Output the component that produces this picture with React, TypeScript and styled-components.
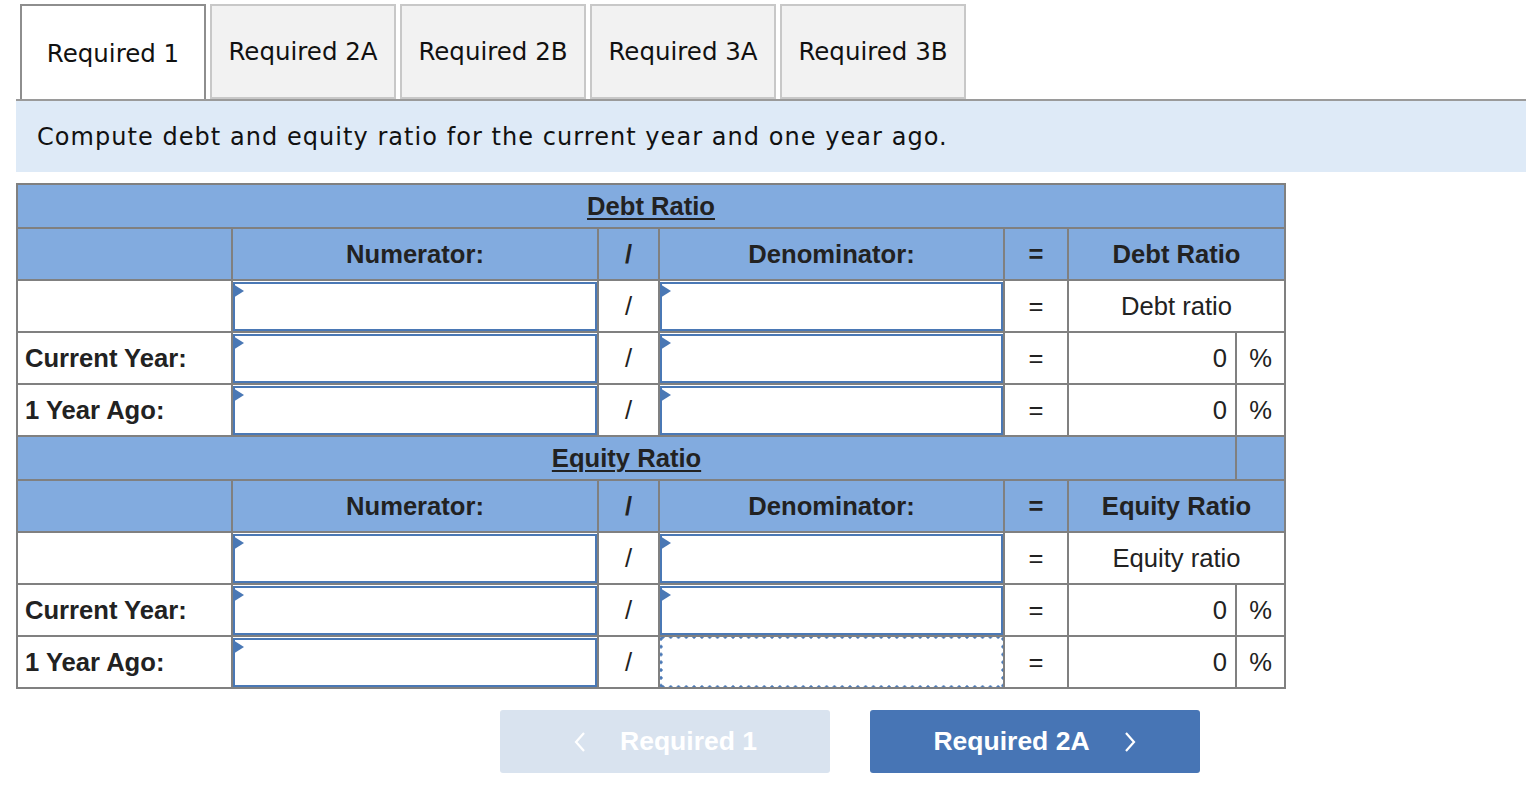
import React from 'react';
import styled, { createGlobalStyle } from 'styled-components';

type Row = { label: string; first?: boolean; resultText?: string; focusDenominator?: boolean };

const tabs = ['Required 1', 'Required 2A', 'Required 2B', 'Required 3A', 'Required 3B'];

const sections: { title: string; resultHeader: string; rows: Row[]; titleSpacer: boolean }[] = [
  {
    title: 'Debt Ratio',
    resultHeader: 'Debt Ratio',
    titleSpacer: false,
    rows: [
      { label: '', first: true, resultText: 'Debt ratio' },
      { label: 'Current Year:' },
      { label: '1 Year Ago:' },
    ],
  },
  {
    title: 'Equity Ratio',
    resultHeader: 'Equity Ratio',
    titleSpacer: true,
    rows: [
      { label: '', first: true, resultText: 'Equity ratio' },
      { label: 'Current Year:' },
      { label: '1 Year Ago:', focusDenominator: true },
    ],
  },
];

const GlobalStyle = createGlobalStyle`
  body {
    margin: 0;
    background: #fff;
    font-family: "Liberation Sans", Arial, sans-serif;
    color: #222;
  }
`;

const Page = styled.div`
  padding: 4px 0 0 16px;
`;

const TabBar = styled.div`
  display: flex;
  gap: 4px;
  padding-left: 4px;
  border-bottom: 2px solid #9a9a9a;
`;

const Tab = styled.div<{ $active?: boolean }>`
  width: 186px;
  height: 95px;
  box-sizing: border-box;
  display: flex;
  align-items: center;
  justify-content: center;
  font-family: "DejaVu Sans", Verdana, sans-serif;
  font-size: 24.5px;
  color: #111;
  background: ${(p) => (p.$active ? '#fff' : '#f2f2f2')};
  border: 2px solid ${(p) => (p.$active ? '#8e8e8e' : '#c8c8c8')};
  border-bottom: ${(p) => (p.$active ? 'none' : '2px solid #c8c8c8')};
  margin-bottom: ${(p) => (p.$active ? '-2px' : '0')};
  padding-top: ${(p) => (p.$active ? '2px' : '0')};
`;

const Instruction = styled.div`
  height: 71px;
  display: flex;
  align-items: center;
  padding-left: 21px;
  background: #deeaf7;
  font-family: "DejaVu Sans", Verdana, sans-serif;
  font-size: 24px;
  letter-spacing: 1.05px;
  color: #111;
`;

const Sheet = styled.table`
  margin-top: 11px;
  width: 1268px;
  border-collapse: collapse;
  table-layout: fixed;
  border: 2px solid #808080;
  font-size: 25.6px;
`;

const TitleCell = styled.th`
  height: 42px;
  padding: 0;
  background: #82abdf;
  border: 2px solid #808080;
  text-align: center;
  font-weight: bold;
  text-decoration: underline;
  text-underline-offset: 3px;
  text-decoration-thickness: 2px;
  color: #222;
`;

const HeadCell = styled.th`
  height: 50px;
  padding: 0;
  background: #82abdf;
  border: 2px solid #808080;
  text-align: center;
  font-weight: bold;
  color: #222;
`;

const Cell = styled.td<{ $align?: 'left' | 'center' | 'right'; $bold?: boolean }>`
  height: 50px;
  padding: 0 ${(p) => (p.$align === 'right' ? '8px' : '0')} 0 ${(p) => (p.$align === 'left' ? '7px' : '0')};
  border: 2px solid #808080;
  text-align: ${(p) => p.$align ?? 'center'};
  font-weight: ${(p) => (p.$bold ? 'bold' : 'normal')};
  background: #fff;
  color: #222;
`;

const InputCell = styled.td`
  height: 50px;
  padding: 0;
  border: 2px solid #808080;
  background: #fff;
`;

const EntryBox = styled.div`
  position: relative;
  height: 49px;
  box-sizing: border-box;
  border: 2px solid #4a78b5;
  margin-top: 1px;

  /* small blue flag in the top-left corner */
  &::before {
    content: '';
    position: absolute;
    top: 0;
    left: -2px;
    width: 11px;
    height: 14px;
    background: #4a78b5;
    clip-path: polygon(0 0, 100% 50%, 0 100%);
  }
`;

const dot = 'radial-gradient(circle, #4a78b5 1.4px, transparent 1.9px)';

// focused entry: dotted ring instead of the solid border
const FocusedBox = styled.div`
  height: 54px;
  margin: -2px -2px -2px -1px;
  background:
    ${dot} left top / 7.8px 4px repeat-x,
    ${dot} left bottom / 7.8px 4px repeat-x,
    ${dot} left top / 4px 7.8px repeat-y,
    ${dot} right top / 4px 7.8px repeat-y;
`;

const ButtonRow = styled.div`
  display: flex;
  gap: 40px;
  margin-top: 21px;
  padding-left: 484px;
`;

const NavButton = styled.button<{ $disabled?: boolean }>`
  width: 330px;
  height: 63px;
  display: flex;
  align-items: center;
  justify-content: center;
  gap: 33px;
  border: none;
  border-radius: 3px;
  background: ${(p) => (p.$disabled ? '#d9e3ef' : '#4775b5')};
  color: #fff;
  font-family: "Liberation Sans", Arial, sans-serif;
  font-weight: bold;
  font-size: 26.5px;
  cursor: ${(p) => (p.$disabled ? 'default' : 'pointer')};
`;

const Chevron = ({ dir }: { dir: 'left' | 'right' }) => (
  <svg width="14" height="22" viewBox="0 0 14 22" fill="none">
    <polyline
      points={dir === 'left' ? '11,2 3,11 11,20' : '3,2 11,11 3,20'}
      stroke="#fff"
      strokeWidth="2.2"
      strokeLinejoin="miter"
    />
  </svg>
);

const Entry = ({ focused }: { focused?: boolean }) => (focused ? <FocusedBox /> : <EntryBox />);

const App: React.FC = () => {
  return (
    <Page>
      <GlobalStyle />
      <TabBar>
        {tabs.map((t, i) => (
          <Tab key={t} $active={i === 0}>
            {t}
          </Tab>
        ))}
      </TabBar>
      <Instruction>Compute debt and equity ratio for the current year and one year ago.</Instruction>

      <Sheet>
        <colgroup>
          <col style={{ width: 215 }} />
          <col style={{ width: 366 }} />
          <col style={{ width: 61 }} />
          <col style={{ width: 345 }} />
          <col style={{ width: 64 }} />
          <col style={{ width: 168 }} />
          <col style={{ width: 49 }} />
        </colgroup>
        <tbody>
          {sections.map((s) => (
            <React.Fragment key={s.title}>
              <tr>
                <TitleCell colSpan={s.titleSpacer ? 6 : 7}>{s.title}</TitleCell>
                {s.titleSpacer && <TitleCell as="td" />}
              </tr>
              <tr>
                <HeadCell />
                <HeadCell>Numerator:</HeadCell>
                <HeadCell>/</HeadCell>
                <HeadCell>Denominator:</HeadCell>
                <HeadCell>=</HeadCell>
                <HeadCell colSpan={2}>{s.resultHeader}</HeadCell>
              </tr>
              {s.rows.map((r, i) => (
                <tr key={i}>
                  <Cell $align="left" $bold>
                    {r.label}
                  </Cell>
                  <InputCell>
                    <Entry />
                  </InputCell>
                  <Cell>/</Cell>
                  <InputCell>
                    <Entry focused={r.focusDenominator} />
                  </InputCell>
                  <Cell>=</Cell>
                  {r.first ? (
                    <Cell colSpan={2}>{r.resultText}</Cell>
                  ) : (
                    <>
                      <Cell $align="right">0</Cell>
                      <Cell>%</Cell>
                    </>
                  )}
                </tr>
              ))}
            </React.Fragment>
          ))}
        </tbody>
      </Sheet>

      <ButtonRow>
        <NavButton $disabled>
          <Chevron dir="left" />
          <span>Required 1</span>
        </NavButton>
        <NavButton>
          <span>Required 2A</span>
          <Chevron dir="right" />
        </NavButton>
      </ButtonRow>
    </Page>
  );
};

export default App;
